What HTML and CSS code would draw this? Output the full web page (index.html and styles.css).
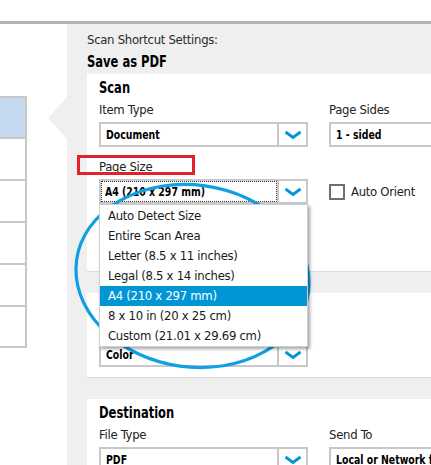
FILE: index.html
```html
<!DOCTYPE html>
<html lang="en">
<head>
    <meta charset="UTF-8">
    <title>Scan Shortcut Settings</title>
    <link rel="stylesheet" href="styles.css">
</head>
<body>
    <div class="topbar"></div>

    <div class="main">
        <div class="sidebar">
            <div class="shortcut-list">
                <div class="shortcut active"></div>
                <div class="shortcut"></div>
                <div class="shortcut"></div>
                <div class="shortcut"></div>
                <div class="shortcut"></div>
                <div class="shortcut"></div>
            </div>
        </div>

        <div class="panel">
            <div class="panel-sub">Scan Shortcut Settings:</div>
            <div class="panel-title">Save as PDF</div>

            <section class="card card-scan">
                <h2>Scan</h2>
                <div class="row">
                    <div class="field">
                        <label>Item Type</label>
                        <div class="select">
                            <span class="select-value"><span class="value-text">Document</span></span>
                            <span class="select-arrow"><svg width="18" height="10" viewBox="0 0 18 10"><path d="M1.5 2 L9 7.5 L16.5 2" fill="none" stroke="#0096d6" stroke-width="2.8"/></svg></span>
                        </div>
                    </div>
                    <div class="field">
                        <label>Page Sides</label>
                        <div class="select">
                            <span class="select-value"><span class="value-text">1 - sided</span></span>
                            <span class="select-arrow"><svg width="18" height="10" viewBox="0 0 18 10"><path d="M1.5 2 L9 7.5 L16.5 2" fill="none" stroke="#0096d6" stroke-width="2.8"/></svg></span>
                        </div>
                    </div>
                </div>
                <div class="row">
                    <div class="field">
                        <label>Page Size</label>
                        <div class="select focused">
                            <span class="select-value"><span class="value-text">A4 (210 x 297 mm)</span></span>
                            <span class="select-arrow"><svg width="18" height="10" viewBox="0 0 18 10"><path d="M1.5 2 L9 7.5 L16.5 2" fill="none" stroke="#0096d6" stroke-width="2.8"/></svg></span>
                            <ul class="options">
                                <li>Auto Detect Size</li>
                                <li>Entire Scan Area</li>
                                <li>Letter (8.5 x 11 inches)</li>
                                <li>Legal (8.5 x 14 inches)</li>
                                <li class="current">A4 (210 x 297 mm)</li>
                                <li>8 x 10 in (20 x 25 cm)</li>
                                <li>Custom (21.01 x 29.69 cm)</li>
                            </ul>
                        </div>
                    </div>
                    <div class="field field-check">
                        <span class="checkbox"></span>
                        <span>Auto Orient</span>
                    </div>
                </div>
            </section>

            <section class="card card-color">
                <div class="row">
                    <div class="field">
                        <div class="select">
                            <span class="select-value"><span class="value-text">Color</span></span>
                            <span class="select-arrow"><svg width="18" height="10" viewBox="0 0 18 10"><path d="M1.5 2 L9 7.5 L16.5 2" fill="none" stroke="#0096d6" stroke-width="2.8"/></svg></span>
                        </div>
                    </div>
                </div>
            </section>

            <section class="card">
                <h2>Destination</h2>
                <div class="row">
                    <div class="field">
                        <label>File Type</label>
                        <div class="select">
                            <span class="select-value"><span class="value-text">PDF</span></span>
                            <span class="select-arrow"><svg width="18" height="10" viewBox="0 0 18 10"><path d="M1.5 2 L9 7.5 L16.5 2" fill="none" stroke="#0096d6" stroke-width="2.8"/></svg></span>
                        </div>
                    </div>
                    <div class="field">
                        <label>Send To</label>
                        <div class="select">
                            <span class="select-value"><span class="value-text">Local or Network folder</span></span>
                            <span class="select-arrow"><svg width="18" height="10" viewBox="0 0 18 10"><path d="M1.5 2 L9 7.5 L16.5 2" fill="none" stroke="#0096d6" stroke-width="2.8"/></svg></span>
                        </div>
                    </div>
                </div>
            </section>
        </div>
    </div>

    <!-- annotation marks drawn over the screenshot -->
    <div class="mark-box"></div>
    <svg class="mark-circle" width="431" height="465" viewBox="0 0 431 465">
        <ellipse cx="192.5" cy="276" rx="117" ry="91" transform="rotate(8 192.5 276)" fill="none" stroke="#109fe3" stroke-width="3.2"/>
    </svg>
</body>
</html>
```

FILE: styles.css
```css
body {
    margin: 0;
    width: 431px;
    height: 465px;
    overflow: hidden;
    position: relative;
    background: #fff;
    color: #1a1a1a;
    font-family: "DejaVu Sans Condensed", "Liberation Sans", sans-serif;
    font-size: 13px;
    letter-spacing: -0.3px;
}
.topbar {
    height: 21px;
    border-bottom: 3px solid #b4b4b4;
}
.main {
    display: flex;
    height: 441px;
}
.sidebar {
    width: 67px;
    flex: none;
    padding-top: 72px;
    box-sizing: border-box;
}
.shortcut-list {
    width: 25px;
    border-right: 2px solid #c8c8c8;
    border-bottom: 2px solid #c8c8c8;
}
.shortcut {
    height: 40px;
    border-top: 2px solid #c8c8c8;
}
.shortcut:first-child,
.shortcut:last-child {
    height: 39px;
}
.shortcut.active {
    background: #c5d9f0;
}
.panel {
    flex: 1;
    min-width: 0;
    position: relative;
    background: #efefef;
    padding: 7px 0 0 20px;
}
/* callout arrow pointing at the selected shortcut */
.panel::before {
    content: "";
    position: absolute;
    left: -19px;
    top: 73px;
    border-right: 19px solid #efefef;
    border-top: 21px solid transparent;
    border-bottom: 21px solid transparent;
}
.panel-sub {
    line-height: 17px;
    color: #2a2a2a;
}
/* the bold face is squeezed to match the narrow printer UI font */
.panel-title,
.card h2 {
    font-size: 16px;
    font-weight: bold;
    letter-spacing: 0;
    color: #000;
    transform: scaleX(0.8);
    transform-origin: left center;
}
.panel-title {
    margin-top: 4px;
    line-height: 19px;
}
.card {
    width: 420px;
    box-sizing: border-box;
    margin-top: 21px;
    padding: 5px 0 0 12px;
    background: #fff;
    border-bottom: 1px solid #dcdcdc;
}
.card-scan {
    margin-top: 3px;
    height: 198px;
}
.card-color {
    height: 85px;
    padding-top: 49px;
}
.card h2 {
    margin: 0;
    line-height: 18px;
}
.row {
    display: flex;
    gap: 21px;
    margin-top: 4px;
}
.row + .row {
    margin-top: 11px;
}
.card-color .row {
    margin-top: 0;
}
.field {
    width: 209px;
    flex: none;
}
.field label {
    display: block;
    line-height: 17px;
    margin-bottom: 4px;
    color: #222;
}
.field-check {
    display: flex;
    align-items: center;
    gap: 6px;
    padding-top: 21px;
    height: 25px;
    color: #222;
}
.checkbox {
    width: 16px;
    height: 16px;
    flex: none;
    box-sizing: border-box;
    border: 2px solid #707070;
    background: #fff;
}
.select {
    position: relative;
    display: flex;
    height: 25px;
    box-sizing: border-box;
    border: 2px solid #c8c8c8;
    background: #fff;
    color: #000;
}
.select-value {
    flex: 1;
    min-width: 0;
    padding-left: 5px;
    line-height: 21px;
    white-space: nowrap;
    overflow: hidden;
}
.value-text {
    display: inline-block;
    font-size: 13px;
    font-weight: bold;
    letter-spacing: 0;
    transform: scaleX(0.8);
    transform-origin: left center;
}
.select.focused .select-value {
    outline: 1px dotted #333;
    outline-offset: -1px;
    padding-left: 4px;
}
.select-arrow {
    width: 29px;
    flex: none;
    box-sizing: border-box;
    border-left: 2px solid #c8c8c8;
    display: flex;
    align-items: center;
    justify-content: center;
}
.options {
    position: absolute;
    left: -2px;
    top: 23px;
    z-index: 2;
    width: 209px;
    box-sizing: border-box;
    margin: 0;
    padding: 1px 0 0;
    list-style: none;
    background: #fff;
    border: 1px solid #cfcfcf;
    box-shadow: 2px 2px 3px rgba(0, 0, 0, 0.35);
    color: #1a1a1a;
}
.options li {
    height: 20px;
    line-height: 20px;
    padding-left: 8px;
    white-space: nowrap;
}
.options li.current {
    background: #0096d6;
    color: #fff;
}
.mark-box {
    position: absolute;
    left: 77px;
    top: 155px;
    width: 118px;
    height: 20px;
    box-sizing: border-box;
    border: 3px solid #e3212b;
}
.mark-circle {
    position: absolute;
    left: 0;
    top: 0;
    pointer-events: none;
}
```
